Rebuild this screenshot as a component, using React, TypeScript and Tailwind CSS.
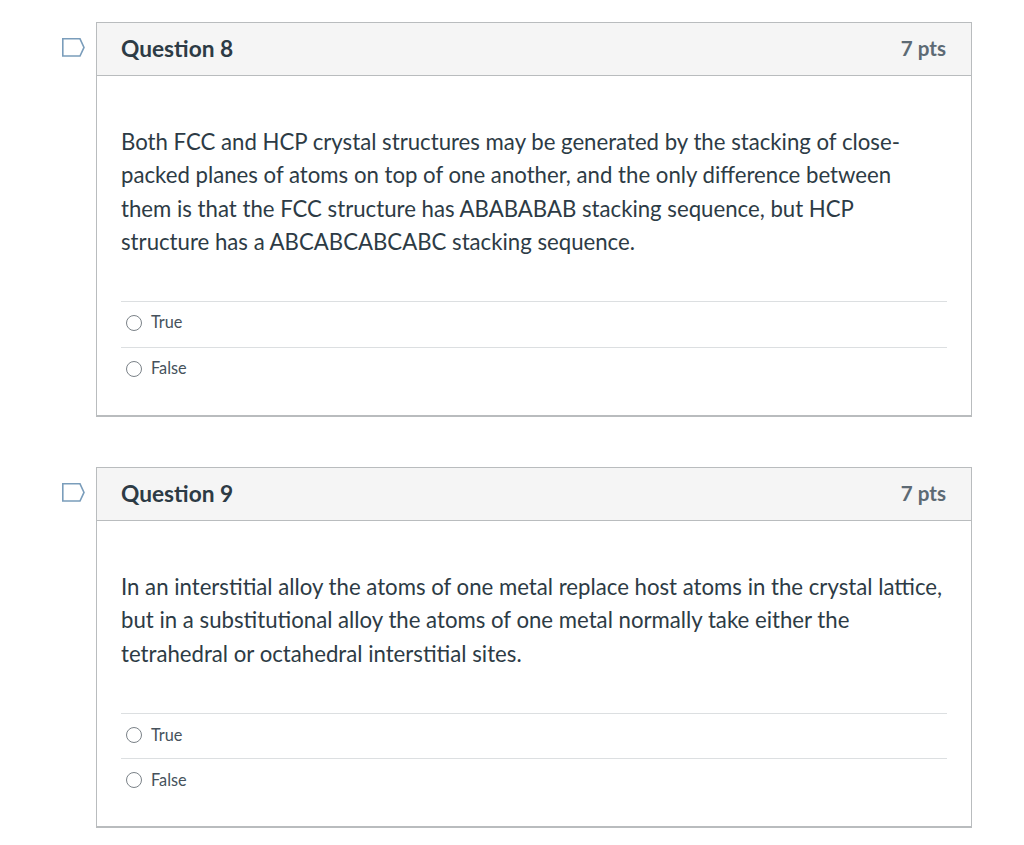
import React from 'react';

type QuestionProps = {
  title: string;
  points: string;
  lines: string[];
  className: string;
  listClass: string;
  firstRowClass: string;
};

function Flag() {
  return (
    <svg width="26" height="21" viewBox="0 0 26 21" className="mt-[15px] shrink-0" fill="none">
      <path d="M2.8 1.8H20L24 10.4L20 19H2.8Z" stroke="#7a9dbb" strokeWidth="1.6" />
    </svg>
  );
}

function Answer({ label, className }: { label: string; className: string }) {
  return (
    <div className={`flex items-center pb-[3px] ${className}`}>
      <span className="ml-[5px] mt-[1px] h-[16px] w-[16px] rounded-full border border-[#7b8288] bg-white" />
      <span className="ml-[9px] text-[16.3px] text-[#46525c]">{label}</span>
    </div>
  );
}

function Question({ title, points, lines, className, listClass, firstRowClass }: QuestionProps) {
  return (
    <div className={`flex ${className}`}>
      <div className="w-[96px] shrink-0 pl-[60px]">
        <Flag />
      </div>
      <section className="w-[876px] border border-b-2 border-[#b9bcbe]">
        <header className="flex h-[53px] items-center justify-between border-b border-[#b9bcbe] bg-[#f5f5f5] pl-[24px] pr-[25px]">
          <h2 className="text-[22.7px] font-bold text-[#2d3b45]">{title}</h2>
          <span className="pb-[1px] text-[20.6px] font-bold text-[#5d6a74]">{points}</span>
        </header>
        <div className="px-[24px] pt-[49px]">
          <div className="text-[22.2px] leading-[33.4px] text-[#2d3b45]">
            {lines.map((line) => (
              <p key={line} className="whitespace-nowrap">{line}</p>
            ))}
          </div>
          <div className={`border-t border-[#dcdfe1] ${listClass}`}>
            <Answer label="True" className={firstRowClass} />
            <Answer label="False" className="h-[45px] border-t border-[#dcdfe1]" />
          </div>
        </div>
      </section>
    </div>
  );
}

export default function App() {
  return (
    <div className="h-[845px] w-[1024px] overflow-hidden bg-white pt-[22px] font-['Lato','Open_Sans',sans-serif]">
      <Question
        title="Question 8"
        points="7 pts"
        className="h-[395px]"
        listClass="mt-[42px]"
        firstRowClass="h-[45px]"
        lines={[
          'Both FCC and HCP crystal structures may be generated by the stacking of close-',
          'packed planes of atoms on top of one another, and the only difference between',
          'them is that the FCC structure has ABABABAB stacking sequence, but HCP',
          'structure has a ABCABCABCABC stacking sequence.',
        ]}
      />
      <Question
        title="Question 9"
        points="7 pts"
        className="mt-[50px] h-[361px]"
        listClass="mt-[43px]"
        firstRowClass="h-[44px]"
        lines={[
          'In an interstitial alloy the atoms of one metal replace host atoms in the crystal lattice,',
          'but in a substitutional alloy the atoms of one metal normally take either the',
          'tetrahedral or octahedral interstitial sites.',
        ]}
      />
    </div>
  );
}
